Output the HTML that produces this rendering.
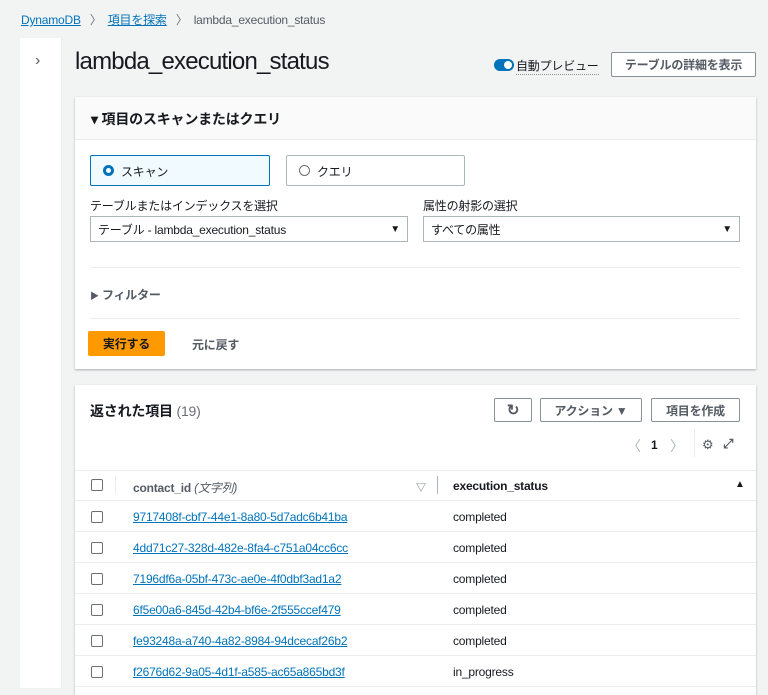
<!DOCTYPE html>
<html><head><meta charset="utf-8"><style>
*{box-sizing:border-box;margin:0;padding:0}
body{width:768px;height:688px;overflow:hidden;background:#f2f3f3;font-family:"Liberation Sans","Noto Sans CJK JP",sans-serif;color:#16191f;font-size:12px;position:relative;letter-spacing:-0.2px}
.a{position:absolute}
.lnk{color:#0073bb;text-decoration:underline}
.btn{position:absolute;background:#fff;border:1px solid #879196;border-radius:2px;font-weight:bold;color:#545b64;display:flex;align-items:center;justify-content:center;font-size:12px}
.sel{position:absolute;border:1px solid #aab7b8;background:#fff;height:26px;padding:0 7px;display:flex;align-items:center;justify-content:space-between;font-size:12px}
.cb{position:absolute;left:91px;width:12px;height:12px;border:1px solid #687078;border-radius:2px;background:#fff}
.row{position:absolute;left:75px;width:681px;height:31px;border-bottom:1px solid #eaeded}
.row .id{position:absolute;left:58px;top:9px;color:#0073bb;text-decoration:underline;font-size:12px}
.row .st{position:absolute;left:378px;top:9px;font-size:12px}
.row .cb{left:16px;top:10px}
</style></head><body>
<div class="a" style="left:21px;top:11px;font-size:12px"><span class="lnk">DynamoDB</span> <span style="color:#687078;margin:0 6px">〉</span><span class="lnk">項目を探索</span> <span style="color:#687078;margin:0 6px">〉</span><span style="color:#545b64">lambda_execution_status</span></div>
<div class="a" style="left:20px;top:38px;width:42px;height:650px;background:#fff;border-right:1px solid #eaeded"></div>
<div class="a" style="left:35px;top:52px;font-size:16px;color:#545b64">›</div>
<div class="a" style="left:75px;top:48px;font-size:24px;color:#16191f;letter-spacing:-0.8px">lambda_execution_status</div>
<div class="a" style="left:494px;top:59px;width:20px;height:12px;border-radius:6px;background:#0073bb"><div style="position:absolute;right:2px;top:2px;width:8px;height:8px;border-radius:50%;background:#fff"></div></div>
<div class="a" style="left:516px;top:57px;font-size:12px;border-bottom:1px dotted #879196">自動プレビュー</div>
<div class="btn" style="left:611px;top:52px;width:145px;height:25px">テーブルの詳細を表示</div>

<div class="a" style="left:75px;top:97px;width:681px;height:272px;background:#fff;box-shadow:0 1px 2px rgba(0,28,36,.3)">
 <div style="height:43px;background:#fafafa;border-bottom:1px solid #eaeded;padding:12px 0 0 16px;font-size:14px;font-weight:bold">▾ 項目のスキャンまたはクエリ</div>
</div>
<div class="a" style="left:90px;top:155px;width:180px;height:31px;background:#f1faff;border:1px solid #0073bb;border-radius:2px"></div>
<div class="a" style="left:103px;top:165px;width:11px;height:11px;border-radius:50%;border:3px solid #0073bb;background:#fff"></div>
<div class="a" style="left:121px;top:163px">スキャン</div>
<div class="a" style="left:286px;top:155px;width:179px;height:31px;border:1px solid #aab7b8;border-radius:2px"></div>
<div class="a" style="left:299px;top:165px;width:11px;height:11px;border-radius:50%;border:1px solid #687078"></div>
<div class="a" style="left:317px;top:163px">クエリ</div>
<div class="a" style="left:90px;top:197px">テーブルまたはインデックスを選択</div>
<div class="a" style="left:423px;top:197px">属性の射影の選択</div>
<div class="sel" style="left:90px;top:216px;width:318px">テーブル - lambda_execution_status<span style="font-size:10px">▼</span></div>
<div class="sel" style="left:423px;top:216px;width:317px">すべての属性<span style="font-size:10px">▼</span></div>
<div class="a" style="left:90px;top:267px;width:650px;border-top:1px solid #eaeded"></div>
<div class="a" style="left:90px;top:286px;font-weight:bold;color:#545b64"><span style="font-size:9px">▶</span> フィルター</div>
<div class="a" style="left:90px;top:318px;width:650px;border-top:1px solid #eaeded"></div>
<div class="a" style="left:88px;top:331px;width:77px;height:25px;background:#ff9900;border-radius:2px;color:#16191f;font-weight:bold;display:flex;align-items:center;justify-content:center">実行する</div>
<div class="a" style="left:192px;top:336px;font-weight:bold;color:#545b64">元に戻す</div>

<div class="a" style="left:75px;top:385px;width:681px;height:310px;background:#fff;box-shadow:0 1px 2px rgba(0,28,36,.3)"></div>
<div class="a" style="left:90px;top:401px;font-size:14px;font-weight:bold">返された項目 <span style="font-weight:normal;color:#687078">(19)</span></div>
<div class="btn" style="left:494px;top:398px;width:38px;height:24px;font-size:15px">↻</div>
<div class="btn" style="left:540px;top:398px;width:102px;height:24px">アクション&nbsp;▼</div>
<div class="btn" style="left:651px;top:398px;width:89px;height:24px">項目を作成</div>
<div class="a" style="left:627px;top:436px;color:#aab7b8;font-size:14px">〈</div>
<div class="a" style="left:651px;top:438px;font-weight:bold">1</div>
<div class="a" style="left:670px;top:436px;color:#aab7b8;font-size:14px">〉</div>
<div class="a" style="left:694px;top:429px;height:28px;border-left:1px solid #eaeded"></div>
<div class="a" style="left:702px;top:437px;font-size:13px;color:#545b64">⚙</div>
<div class="a" style="left:723px;top:436px;font-size:13px;color:#545b64;font-weight:bold">⤢</div>
<div class="a" style="left:75px;top:470px;width:681px;height:31px;border-top:1px solid #eaeded;border-bottom:1px solid #eaeded"></div>
<div class="cb" style="top:479px"></div>
<div class="a" style="left:115px;top:476px;height:18px;border-left:1px solid #eaeded"></div>
<div class="a" style="left:133px;top:479px;color:#545b64;font-weight:bold">contact_id <i style="font-weight:normal">(文字列)</i></div>
<div class="a" style="left:416px;top:479px;color:#687078;font-size:10px">▽</div>
<div class="a" style="left:437px;top:476px;height:18px;border-left:1px solid #aab7b8"></div>
<div class="a" style="left:453px;top:479px;font-weight:bold">execution_status</div>
<div class="a" style="left:735px;top:479px;font-size:10px">▲</div>
<div class="row" style="top:501px"><div class="cb"></div><span class="id">9717408f-cbf7-44e1-8a80-5d7adc6b41ba</span><span class="st">completed</span></div>
<div class="row" style="top:532px"><div class="cb"></div><span class="id">4dd71c27-328d-482e-8fa4-c751a04cc6cc</span><span class="st">completed</span></div>
<div class="row" style="top:563px"><div class="cb"></div><span class="id">7196df6a-05bf-473c-ae0e-4f0dbf3ad1a2</span><span class="st">completed</span></div>
<div class="row" style="top:594px"><div class="cb"></div><span class="id">6f5e00a6-845d-42b4-bf6e-2f555ccef479</span><span class="st">completed</span></div>
<div class="row" style="top:625px"><div class="cb"></div><span class="id">fe93248a-a740-4a82-8984-94dcecaf26b2</span><span class="st">completed</span></div>
<div class="row" style="top:656px"><div class="cb"></div><span class="id">f2676d62-9a05-4d1f-a585-ac65a865bd3f</span><span class="st">in_progress</span></div>
</body></html>
